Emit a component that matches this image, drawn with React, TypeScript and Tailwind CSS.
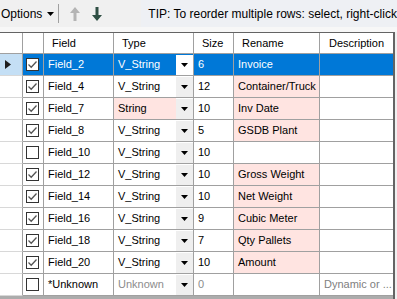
import React from 'react'

type Row = {
  on: boolean
  field: string
  type: string
  size: string
  rename: string
  desc?: string
  typePink?: boolean
  unknown?: boolean
}

const rows: Row[] = [
  { on: true, field: 'Field_2', type: 'V_String', size: '6', rename: 'Invoice' },
  { on: true, field: 'Field_4', type: 'V_String', size: '12', rename: 'Container/Truck' },
  { on: true, field: 'Field_7', type: 'String', size: '10', rename: 'Inv Date', typePink: true },
  { on: true, field: 'Field_8', type: 'V_String', size: '5', rename: 'GSDB Plant' },
  { on: false, field: 'Field_10', type: 'V_String', size: '10', rename: '' },
  { on: true, field: 'Field_12', type: 'V_String', size: '10', rename: 'Gross Weight' },
  { on: true, field: 'Field_14', type: 'V_String', size: '10', rename: 'Net Weight' },
  { on: true, field: 'Field_16', type: 'V_String', size: '9', rename: 'Cubic Meter' },
  { on: true, field: 'Field_18', type: 'V_String', size: '7', rename: 'Qty Pallets' },
  { on: true, field: 'Field_20', type: 'V_String', size: '10', rename: 'Amount' },
  { on: false, field: '*Unknown', type: 'Unknown', size: '0', rename: '', desc: 'Dynamic or ...', unknown: true }
]

const cols = 'grid grid-cols-[23px_21px_70px_80px_40px_86px_73px]'
const cell = 'border-r border-b border-[#a0a0a0] h-full flex items-center overflow-hidden whitespace-nowrap'

const Check = ({ on }: { on: boolean }) => (
  <div className="w-[13px] h-[13px] border border-[#333333] bg-white flex items-center justify-center">
    {on && (
      <svg width="11" height="11" viewBox="0 0 11 11">
        <path d="M1.5 5.5 L4.2 8.2 L9.5 2.5" fill="none" stroke="#555555" strokeWidth="1.3" />
      </svg>
    )}
  </div>
)

const Arrow = ({ down, color }: { down?: boolean; color: string }) => (
  <svg width="10" height="14" viewBox="0 0 10 14" style={{ transform: down ? 'rotate(180deg)' : undefined }}>
    <path d="M5 0 L10 6 L6.5 6 L6.5 14 L3.5 14 L3.5 6 L0 6 Z" fill={color} />
  </svg>
)

const Caret = () => (
  <svg width="7" height="4" viewBox="0 0 7 4">
    <path d="M0 0 L7 0 L3.5 4 Z" fill="#000" />
  </svg>
)

export default function App() {
  return (
    <div className="w-[397px] h-[299px] overflow-hidden bg-[#f7f7f7] font-['Liberation_Sans',Arial,sans-serif] text-black">
      {/* toolbar */}
      <div className="h-[27px] flex items-stretch bg-[#f0f0f0]">
        <div className="flex items-center pl-[1px] text-[12px]">
          Options
          <span className="ml-[5px] flex items-center"><Caret /></span>
        </div>
        <div className="ml-[4px] my-[4px] w-[1px] bg-[#a0a0a0]" />
        <div className="ml-[11px] flex items-center"><Arrow color="#b4b4b4" /></div>
        <div className="ml-[12px] flex items-center"><Arrow down color="#2f4f44" /></div>
        <div className="ml-[39px] flex-1 flex items-center pl-[7px] bg-[#eef0f4] text-[12px] whitespace-nowrap overflow-hidden">
          TIP: To reorder multiple rows: select, right-click and drag
        </div>
      </div>

      {/* grid */}
      <div className="mt-[5px] flex">
        <div className="w-[395px] bg-white border-t border-r-2 border-[#646464] text-[11px]">
          <div className={`${cols} h-[21px]`}>
            <div className={cell} />
            <div className={cell} />
            <div className={`${cell} pl-[8px]`}>Field</div>
            <div className={`${cell} pl-[8px]`}>Type</div>
            <div className={`${cell} pl-[8px]`}>Size</div>
            <div className={`${cell} pl-[8px]`}>Rename</div>
            <div className={`${cell} pl-[9px] border-r-0`}>Description</div>
          </div>
          {rows.map((r, i) => {
            const sel = i === 0
            const bg = sel ? 'bg-[#0078d7] text-white' : ''
            return (
              <div key={r.field} className={`${cols} h-[22px]`}>
                <div className={`${cell} border-b-[#d8d8d8] ${sel ? 'bg-[#c4dff5]' : ''} pl-[5px]`}>
                  {sel && (
                    <svg width="6" height="9" viewBox="0 0 6 9">
                      <path d="M0 0 L6 4.5 L0 9 Z" fill="#1e1e1e" />
                    </svg>
                  )}
                </div>
                <div className={`${cell} ${bg} pl-[3px]`}><Check on={r.on} /></div>
                <div className={`${cell} ${bg} pl-[4px]`}>{r.field}</div>
                <div className={`${cell} ${bg}`}>
                  <div className={`flex-1 h-full flex items-center pl-[4px] ${r.typePink ? 'bg-[#ffe4e1]' : ''} ${r.unknown ? 'text-[#8c8c8c]' : ''}`}>{r.type}</div>
                  <div className={`w-[17px] h-[20px] flex items-center justify-center ${sel ? 'bg-white' : 'bg-[#efefef]'}`}><Caret /></div>
                </div>
                <div className={`${cell} ${bg} pl-[4px] ${r.unknown ? 'text-[#8c8c8c]' : ''}`}>{r.size}</div>
                <div className={`${cell} ${bg} pl-[4px] ${!sel && r.rename ? 'bg-[#ffe4e1]' : ''}`}>{r.rename}</div>
                <div className={`${cell} ${bg} border-r-0 pl-[4px] text-[#808080]`}>{r.desc}</div>
              </div>
            )
          })}
          <div className="h-[4px] bg-[#acacac]" />
        </div>
        <div className="flex-1 bg-[#f0f0f0]" />
      </div>
    </div>
  )
}
